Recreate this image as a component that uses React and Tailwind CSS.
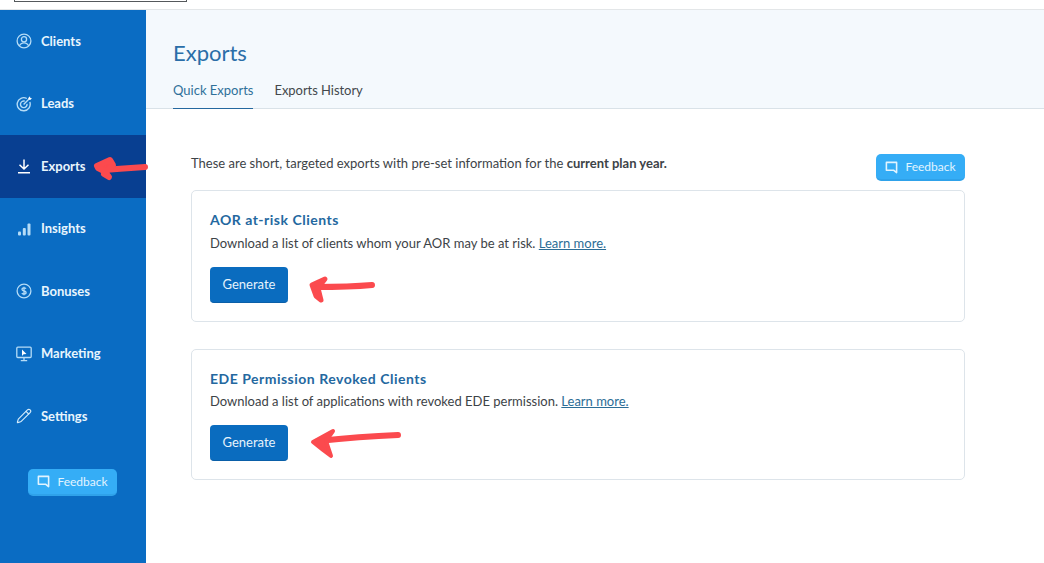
import { Pencil } from 'lucide-react';

const navItems = [
    { label: 'Clients', icon: 'clients' },
    { label: 'Leads', icon: 'leads' },
    { label: 'Exports', icon: 'exports', active: true },
    { label: 'Insights', icon: 'insights' },
    { label: 'Bonuses', icon: 'bonuses' },
    { label: 'Marketing', icon: 'marketing' },
    { label: 'Settings', icon: 'settings' },
];

const NavIcon = ({ name }) => {
    const cls = 'w-[16px] h-[16px] text-[#b5dcf7]';
    if (name === 'clients') {
        return (
            <svg viewBox="0 0 16 16" className={cls} fill="none" stroke="currentColor" strokeWidth="1.3">
                <circle cx="8" cy="8" r="6.9" />
                <circle cx="8" cy="6.3" r="2.6" />
                <path d="M3.4 13c.8-2.2 2.5-3.2 4.600-3.200s3.800 1 4.600 3.200" />
            </svg>
        );
    }
    if (name === 'leads') {
        return (
            <svg viewBox="0 0 16 16" className={cls} fill="none" stroke="currentColor" strokeWidth="1.4">
                <path d="M10.800 2.500A6.500 6.500 0 1 0 13.800 6" />
                <path d="M8.800 5.200A3.300 3.300 0 1 0 11 7.800" />
                <path d="M7.600 8.500 13.500 2.500" />
                <path d="M12.300 2 14 .2 14.300 1.900 16 2.200 14.200 3.900 12.500 3.600z" fill="white" stroke="none" />
            </svg>
        );
    }
    if (name === 'exports') {
        return (
            <svg viewBox="0 0 16 16" className="w-[16px] h-[16px] text-white" fill="none" stroke="currentColor" strokeWidth="1.500">
                <path d="M8 1.500v9.500M3.500 6.800 8 11l4.500-4.200M2 14.700h12" />
            </svg>
        );
    }
    if (name === 'insights') {
        return (
            <svg viewBox="0 0 16 16" className={cls} fill="currentColor">
                <rect x="2" y="10.500" width="3" height="4" rx="1" />
                <rect x="6.800" y="7" width="3" height="7.500" rx="1" />
                <rect x="11.500" y="2.500" width="3" height="12" rx="1" />
            </svg>
        );
    }
    if (name === 'bonuses') {
        return (
            <svg viewBox="0 0 16 16" className={cls} fill="none" stroke="currentColor" strokeWidth="1.300">
                <circle cx="8" cy="8" r="6.900" />
                <path d="M10 5.700C9.500 5 8.800 4.800 8 4.800c-1.200 0-2 .6-2 1.600 0 2.200 4.100 1 4.100 3.200 0 1-.9 1.600-2.100 1.600-.9 0-1.700-.3-2.200-1M8 3.700v8.600" />
            </svg>
        );
    }
    if (name === 'marketing') {
        return (
            <svg viewBox="0 0 16 16" className={cls} fill="none" stroke="currentColor" strokeWidth="1.300">
                <rect x=".8" y="1.200" width="14.400" height="10.300" rx="1" />
                <path d="M8 11.500v3M4.800 14.700h6.400" />
                <path d="M6 3.400v6.500l1.600-1.600 2.900-.2z" fill="white" stroke="none" />
            </svg>
        );
    }
    return <Pencil className="w-[16px] h-[16px] text-[#d5ecfb]" strokeWidth={1.700} />;
};

const ChatIcon = () => (
    <svg viewBox="0 0 14 14" className="w-[13px] h-[13px] shrink-0" fill="none" stroke="currentColor" strokeWidth="1.700">
        <path d="M1.500 1.500h11v11L9.500 10H1.500z" strokeLinejoin="round" />
    </svg>
);

const FeedbackButton = () => (
    <button className="flex items-center justify-center gap-[7px] w-[89px] h-[27px] pt-[1px] rounded-[5px] bg-[#35adf6] border-b-2 border-[#2fa2ea] text-[#e2f4ff] text-[12px]">
        <ChatIcon />
        <span>Feedback</span>
    </button>
);

const ExportCard = ({ title, text, className, textClass }) => (
    <div className={`border border-[#dde4ea] rounded-[5px] pl-[18px] pt-[20px] ${className}`}>
        <h3 className="text-[14px] leading-[18px] font-bold text-[#24689f] tracking-[0.500px]">{title}</h3>
        <p className={`text-[13px] leading-[18px] text-[#3d4347] ${textClass}`}>
            {text} <a className="underline text-[#2c6d96]">Learn more.</a>
        </p>
        <button className="mt-[15px] w-[78px] h-[36px] rounded-[4px] bg-[#0a6cbf] border-b border-[#0a5fa8] text-[#e6f3fc] text-[13px]">Generate</button>
    </div>
);

const App = () => {
    return (
        <div className="relative w-[1044px] h-[563px] overflow-hidden bg-white flex flex-col font-['Lato','Open_Sans',sans-serif]">
            {/* Cut-off box at the top edge */}
            <div className="h-[10px] shrink-0 border-b border-[#e3e6e8] pl-[14px]">
                <div className="w-[173px] h-[2px] border border-t-0 border-[#55595c]" />
            </div>

            <div className="flex flex-1 min-h-0">
                {/* Sidebar */}
                <aside className="w-[146px] shrink-0 bg-[#0a6cc3]">
                    {navItems.map(item => (
                        <div key={item.label} className={`h-[62.500px] flex items-center pl-[16px] gap-[9px] ${item.active ? 'bg-[#083f91]' : ''}`}>
                            <NavIcon name={item.icon} />
                            <span className="text-[13px] font-bold text-[#e8f5fd]">{item.label}</span>
                        </div>
                    ))}
                    <div className="pl-[28px] pt-[21px]">
                        <FeedbackButton />
                    </div>
                </aside>

                {/* Main content */}
                <main className="flex-1 min-w-0">
                    <div className="h-[99px] bg-[#f4f9fd] border-b border-[#d9e2e8] pl-[27px] flex flex-col">
                        <h1 className="text-[22px] leading-[28px] mt-[29px] text-[#2a6ea8]">Exports</h1>
                        <div className="flex gap-[21px] mt-[14px] text-[13px] leading-[18px]">
                            <span className="h-[28px] border-b border-[#24689f] text-[#2f7099]">Quick Exports</span>
                            <span className="text-[#43484c] tracking-[-0.050px]">Exports History</span>
                        </div>
                    </div>

                    <div className="pl-[45px] pr-[79px]">
                        <div className="flex justify-between h-[81px] pt-[45px]">
                            <p className="text-[13px] leading-[18px] text-[#3d4347]">
                                These are short, targeted exports with pre-set information for the <b>current plan year.</b>
                            </p>
                            <FeedbackButton />
                        </div>
                        <ExportCard className="h-[132px]" textClass="mt-[5px]" title="AOR at-risk Clients" text="Download a list of clients whom your AOR may be at risk." />
                        <ExportCard className="h-[131px] mt-[27px]" textClass="mt-[4px]" title="EDE Permission Revoked Clients" text="Download a list of applications with revoked EDE permission." />
                    </div>
                </main>
            </div>

            {/* Red marker arrows drawn over the screenshot */}
            <svg className="absolute left-0 top-0 pointer-events-none" width="1044" height="563" fill="none" stroke="#fb4a4e" strokeLinecap="round" strokeLinejoin="round">
                <path d="M145 167 C130 168 118 169 104 170" strokeWidth="6" />
                <path d="M97 166 L110 160 L113 165 L104 174 L109 177 L104 171 L98 168z" fill="#fb4a4e" strokeWidth="6" />
                <path d="M372 285 C350 287 330 287 315 287" strokeWidth="6" />
                <path d="M312 285 L325 279 L318 288 L321 300 L316 296z" fill="#fb4a4e" strokeWidth="5" />
                <path d="M398 435 C370 436 345 438 318 441" strokeWidth="6" />
                <path d="M313 442 L333 431 L326 441 L331 456 L323 450z" fill="#fb4a4e" strokeWidth="4" />
            </svg>
        </div>
    );
};

export default App;
